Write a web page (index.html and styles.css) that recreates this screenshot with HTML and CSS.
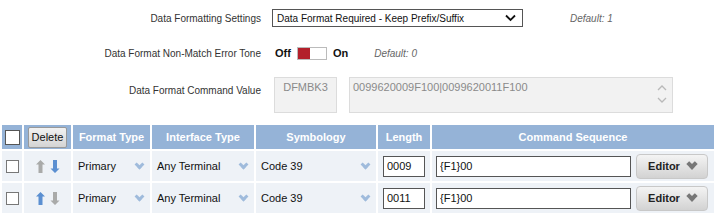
FILE: index.html
```html
<!DOCTYPE html>
<html lang="en">
  <head>
    <meta charset="UTF-8" />
    <title>Data Formatting</title>
    <link rel="stylesheet" href="styles.css">
  </head>
  <body>
    <div class="settings">
      <div class="row row-select">
        <div class="label">Data Formatting Settings</div>
        <div class="control">
          <div class="select">
            <span>Data Format Required - Keep Prefix/Suffix</span>
            <svg class="sel-arrow" width="11" height="8" viewBox="0 0 11 8"><path d="M1 1.5 L5.5 6 L10 1.5" fill="none" stroke="#111" stroke-width="1.8"/></svg>
          </div>
          <span class="default default-1">Default: 1</span>
        </div>
      </div>
      <div class="row row-toggle">
        <div class="label">Data Format Non-Match Error Tone</div>
        <div class="control">
          <b class="tog-txt">Off</b>
          <span class="toggle"><span class="knob"></span></span>
          <b class="tog-txt">On</b>
          <span class="default default-0">Default: 0</span>
        </div>
      </div>
      <div class="row row-value">
        <div class="label">Data Format Command Value</div>
        <div class="control">
          <div class="ro-box ro-short">DFMBK3</div>
          <div class="ro-box ro-long">
            0099620009F100|0099620011F100
            <div class="scroll">
              <svg width="10" height="7" viewBox="0 0 10 7"><path d="M1 6 L5 2 L9 6" fill="none" stroke="#b9b9b9" stroke-width="1.3"/></svg>
              <svg width="10" height="7" viewBox="0 0 10 7"><path d="M1 1 L5 5 L9 1" fill="none" stroke="#b9b9b9" stroke-width="1.3"/></svg>
            </div>
          </div>
        </div>
      </div>
    </div>

    <table class="grid">
      <thead>
        <tr>
          <th class="c-cb"><span class="cb cb-head"></span></th>
          <th class="c-del"><button class="del-btn">Delete</button></th>
          <th class="c-fmt">Format Type</th>
          <th class="c-if">Interface Type</th>
          <th class="c-sym">Symbology</th>
          <th class="c-len">Length</th>
          <th class="c-cmd">Command Sequence</th>
        </tr>
      </thead>
      <tbody>
        <tr>
          <td class="c-cb"><span class="cb"></span></td>
          <td class="c-del">
            <svg width="24" height="13" viewBox="0 0 24 13">
              <path d="M4.5 0 L9 4.5 L6.5 4.5 L6.5 13 L2.5 13 L2.5 4.5 L0 4.5 Z" fill="#a9aaa9"/>
              <path d="M17 0 L17 8.5 L14.5 8.5 L19 13 L23.5 8.5 L21 8.5 L21 0 Z" fill="#5b8fd1"/>
            </svg>
          </td>
          <td><div class="dd"><span>Primary</span><i class="chev"></i></div></td>
          <td><div class="dd"><span>Any Terminal</span><i class="chev"></i></div></td>
          <td><div class="dd"><span>Code 39</span><i class="chev"></i></div></td>
          <td><input class="len" value="0009"></td>
          <td>
            <div class="cmd">
              <input class="cmd-in" value="{F1}00">
              <button class="editor">Editor <i class="ed-chev"></i></button>
            </div>
          </td>
        </tr>
        <tr>
          <td class="c-cb"><span class="cb"></span></td>
          <td class="c-del">
            <svg width="24" height="13" viewBox="0 0 24 13">
              <path d="M4.5 0 L9 4.5 L6.5 4.5 L6.5 13 L2.5 13 L2.5 4.5 L0 4.5 Z" fill="#5b8fd1"/>
              <path d="M17 0 L17 8.5 L14.5 8.5 L19 13 L23.5 8.5 L21 8.5 L21 0 Z" fill="#a9aaa9"/>
            </svg>
          </td>
          <td><div class="dd"><span>Primary</span><i class="chev"></i></div></td>
          <td><div class="dd"><span>Any Terminal</span><i class="chev"></i></div></td>
          <td><div class="dd"><span>Code 39</span><i class="chev"></i></div></td>
          <td><input class="len" value="0011"></td>
          <td>
            <div class="cmd">
              <input class="cmd-in" value="{F1}00">
              <button class="editor">Editor <i class="ed-chev"></i></button>
            </div>
          </td>
        </tr>
      </tbody>
    </table>
  </body>
</html>
```

FILE: styles.css
```css
* {
  box-sizing: border-box;
}
body {
  margin: 0;
  font-family: "Liberation Sans", Arial, sans-serif;
  font-size: 10px;
  color: #222;
  background: #fff;
}
.settings {
  padding-top: 9px;
}
.row {
  display: flex;
  align-items: center;
}
.label {
  width: 261px;
  text-align: right;
  margin-right: 11px;
  color: #333;
}
.control {
  display: flex;
  align-items: center;
}
.row-select {
  height: 18px;
}
.row-toggle {
  margin-top: 19px;
  height: 14px;
}
.row-value {
  margin-top: 17px;
  align-items: flex-start;
}
.row-value .label {
  padding-top: 8px;
}

.select {
  width: 251px;
  height: 18px;
  border: 1px solid #555;
  display: flex;
  align-items: center;
  justify-content: space-between;
  padding: 0 6px 0 4px;
  color: #111;
}
.sel-arrow {
  display: block;
}
.default {
  font-style: italic;
  color: #666;
}
.default-1 {
  margin-left: 47px;
}
.default-0 {
  margin-left: 26px;
}

.tog-txt {
  color: #111;
  font-size: 11px;
}
.tog-txt:first-child {
  margin-left: 3px;
}
.toggle {
  display: inline-block;
  width: 30px;
  height: 13px;
  border: 1px solid #bbb;
  margin: 0 6px 0 6px;
  background: #fff;
}
.knob {
  display: block;
  width: 12px;
  height: 11px;
  background: #b3202b;
}

.ro-box {
  height: 36px;
  background: #f2f2f2;
  border: 1px solid #dcdcdc;
  color: #8a8a8a;
  font-size: 11px;
  padding: 3px 5px;
}
.ro-short {
  width: 63px;
  margin-left: 2px;
  text-align: center;
}
.ro-long {
  width: 324px;
  margin-left: 12px;
  position: relative;
  padding-left: 3px;
}
.scroll {
  position: absolute;
  right: 5px;
  top: 6px;
  display: flex;
  flex-direction: column;
  gap: 6px;
}
.scroll svg {
  display: block;
}

.grid {
  margin-top: 10px;
  border-spacing: 2px;
  width: 716px;
  table-layout: fixed;
}
.grid th {
  background: #95b3d7;
  color: #fff;
  font-weight: bold;
  font-size: 11px;
  height: 24px;
  padding: 0;
  text-align: center;
}
.grid td {
  background: #eef2f7;
  height: 30px;
  padding: 0;
  font-size: 11px;
  color: #111;
}
.c-cb { width: 20px; }
.c-del { width: 47px; }
.c-fmt { width: 77px; }
.c-if { width: 102px; }
.c-sym { width: 120px; }
.c-len { width: 52px; }
.c-cmd { width: 282px; }

.grid td.c-cb,
.grid td.c-del {
  text-align: center;
}
.grid td.c-del svg {
  display: inline-block;
  vertical-align: middle;
  margin-top: 1px;
}
.cb {
  display: inline-block;
  width: 13px;
  height: 13px;
  border: 1px solid #777;
  background: #fff;
  vertical-align: middle;
}
.cb-head {
  width: 15px;
  height: 15px;
  border-color: #555;
}
.del-btn {
  font-family: "Liberation Sans", Arial, sans-serif;
  font-size: 11px;
  color: #111;
  height: 21px;
  padding: 0 3px;
  border: 1px solid #999;
  border-radius: 2px;
  background: linear-gradient(#f2f2f2, #d4d4d4);
}

.dd {
  display: flex;
  align-items: center;
  justify-content: space-between;
  padding: 0 7px 0 5px;
}
.chev {
  width: 7px;
  height: 7px;
  border-right: 3px solid #9fbbdc;
  border-bottom: 3px solid #9fbbdc;
  transform: rotate(45deg);
  margin-top: -4px;
}
.len {
  font-family: "Liberation Sans", Arial, sans-serif;
  font-size: 11px;
  width: 42px;
  height: 21px;
  margin-left: 5px;
  border: 1px solid #555;
  padding: 0 3px;
  color: #111;
}
.cmd {
  display: flex;
  align-items: center;
  padding-left: 4px;
}
.cmd-in {
  font-family: "Liberation Sans", Arial, sans-serif;
  font-size: 11px;
  width: 195px;
  height: 21px;
  border: 1px solid #555;
  padding: 0 3px;
  color: #111;
}
.editor {
  margin-left: 5px;
  width: 72px;
  height: 25px;
  font-family: "Liberation Sans", Arial, sans-serif;
  font-weight: bold;
  font-size: 11px;
  color: #222;
  border: 1px solid #c8c8c8;
  border-radius: 4px;
  background: linear-gradient(#f4f4f4, #d2d2d2);
  display: flex;
  align-items: center;
  justify-content: center;
  gap: 8px;
  padding: 0;
}
.ed-chev {
  width: 8px;
  height: 8px;
  border-right: 4px solid #777;
  border-bottom: 4px solid #777;
  transform: rotate(45deg);
  margin-top: -5px;
}
```
